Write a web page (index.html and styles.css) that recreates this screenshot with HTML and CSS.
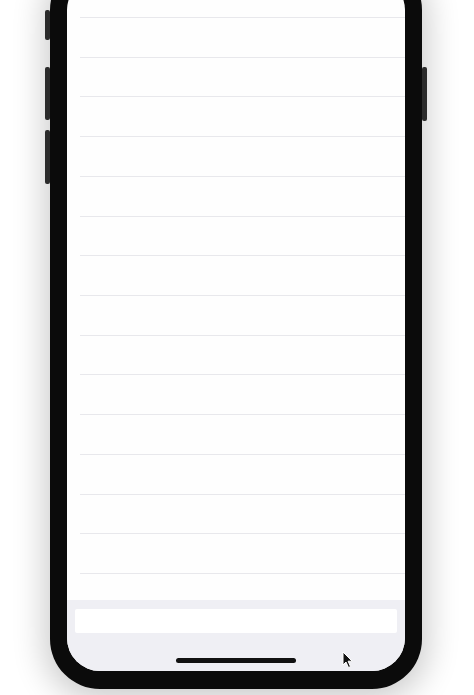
FILE: index.html
```html
<!DOCTYPE html>
<html>
<head>
<meta charset="utf-8">
<link rel="stylesheet" href="styles.css">
</head>
<body>
<div class="stage">
  <div class="phone">
    <span class="btn btn-mute"></span>
    <span class="btn btn-vol-up"></span>
    <span class="btn btn-vol-down"></span>
    <span class="btn btn-power"></span>
    <div class="screen">
      <div class="list">
        <div class="row"></div><div class="row"></div><div class="row"></div><div class="row"></div>
        <div class="row"></div><div class="row"></div><div class="row"></div><div class="row"></div>
        <div class="row"></div><div class="row"></div><div class="row"></div><div class="row"></div>
        <div class="row"></div><div class="row"></div><div class="row"></div><div class="row"></div>
      </div>
      <div class="toolbar">
        <div class="input"></div>
        <div class="home"></div>
      </div>
    </div>
  </div>
  <svg class="cursor" width="12" height="18" viewBox="0 0 12 18">
    <path d="M1 1 L1 14 L4 11 L6.5 16.5 L8.5 15.6 L6.1 10.2 L10.2 10.2 Z" fill="#111" stroke="#fff" stroke-width="1" stroke-linejoin="round"/>
  </svg>
</div>
</body>
</html>
```
FILE: styles.css
```css
html, body {
  margin: 0;
  padding: 0;
  background: #ffffff;
  overflow: hidden;
  font-family: "Liberation Sans", Arial, sans-serif;
}
.stage {
  position: relative;
  width: 474px;
  height: 695px;
  overflow: hidden;
}
.phone {
  position: relative;
  margin-left: 50px;
  margin-top: -40px;
  width: 338px;
  height: 694px;
  border: 17px solid #0b0b0b;
  border-bottom-width: 18px;
  border-radius: 50px;
  box-shadow: 0 6px 32px 6px rgba(0, 0, 0, 0.2);
  background: #0b0b0b;
}
.btn {
  position: absolute;
  width: 5px;
  background: #2b2b2b;
  border-radius: 2px;
}
.btn-mute { left: -22px; top: 33px; height: 30px; }
.btn-vol-up { left: -22px; top: 90px; height: 53px; }
.btn-vol-down { left: -22px; top: 153px; height: 54px; }
.btn-power { right: -22px; top: 90px; height: 54px; }
.screen {
  height: 100%;
  border-radius: 33px;
  overflow: hidden;
  background: #fefefe;
  display: flex;
  flex-direction: column;
}
.list {
  flex: 1;
  overflow: hidden;
  padding-top: 1.3px;
}
.row {
  box-sizing: border-box;
  height: 39.72px;
  margin-left: 13px;
  border-bottom: 1px solid #e8e8ec;
}
.toolbar {
  height: 71px;
  background: #efeff4;
  display: flex;
  flex-direction: column;
  align-items: center;
  padding-top: 9px;
  box-sizing: border-box;
}
.input {
  width: 322px;
  height: 24px;
  background: #ffffff;
  border-radius: 2px;
}
.home {
  margin-top: 25px;
  width: 120px;
  height: 5px;
  border-radius: 3px;
  background: #111111;
}
.cursor {
  position: absolute;
  left: 342px;
  top: 651px;
}
```
